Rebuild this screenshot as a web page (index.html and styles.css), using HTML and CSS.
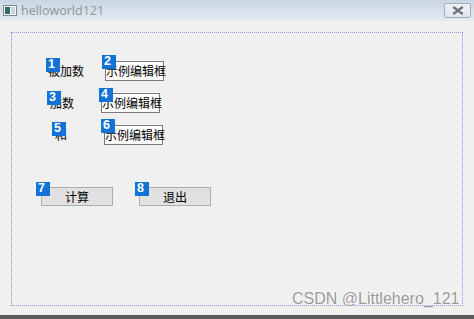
FILE: index.html
```html
<!DOCTYPE html>
<html>
<head>
<meta charset="utf-8">
<link rel="stylesheet" href="styles.css">
</head>
<body>
<div class="window">
  <div class="titlebar">
    <svg class="app-icon" width="14" height="11" viewBox="0 0 14 11">
      <rect x="0.5" y="0.5" width="13" height="10" fill="#f4f6f8" stroke="#7d8a96"/>
      <rect x="2" y="2" width="5" height="7" fill="#2f6b6a"/>
      <rect x="8" y="2" width="4" height="7" fill="#c9d3dc"/>
    </svg>
    <span class="title">helloworld121</span>
    <div class="close-btn">
      <svg width="12" height="9" viewBox="0 0 12 9">
        <path d="M2 1.5 L10 7.5 M10 1.5 L2 7.5" stroke="#6d7278" stroke-width="2.2" stroke-linecap="round"/>
      </svg>
    </div>
  </div>
  <div class="client">
    <div class="frame">
      <div class="row row-1">
        <div class="label label-1"><span class="badge b1">1</span>被加数</div>
        <div class="edit edit-1"><span class="badge b2">2</span>示例编辑框</div>
      </div>
      <div class="row row-2">
        <div class="label label-2"><span class="badge b3">3</span>加数</div>
        <div class="edit edit-2"><span class="badge b4">4</span>示例编辑框</div>
      </div>
      <div class="row row-3">
        <div class="label label-3"><span class="badge b5">5</span>和</div>
        <div class="edit edit-3"><span class="badge b6">6</span>示例编辑框</div>
      </div>
      <div class="buttons">
        <div class="button btn-1"><span class="badge b7">7</span>计算</div>
        <div class="button btn-2"><span class="badge b8">8</span>退出</div>
      </div>
    </div>
  </div>
  <div class="watermark">CSDN @Littlehero_121</div>
  <div class="bottombar"></div>
</div>
</body>
</html>
```

FILE: styles.css
```css
* { box-sizing: border-box; }
html, body {
  margin: 0;
  padding: 0;
  width: 474px;
  height: 319px;
  overflow: hidden;
  background: #f0f0f0;
}
.window {
  position: relative;
  width: 474px;
  height: 319px;
  display: flex;
  flex-direction: column;
  background: #f0f0f0;
  font-family: "Noto Sans CJK SC", "Liberation Sans", sans-serif;
  font-size: 12px;
  color: #000;
}
.titlebar {
  height: 21px;
  display: flex;
  align-items: center;
  padding-left: 3px;
  background: linear-gradient(#c9d6e4, #e4eaf1);
}
.app-icon { display: block; margin-top: -1px; }
.title {
  margin-left: 4px;
  font-family: "Open Sans", "Liberation Sans", sans-serif;
  font-size: 12.5px;
  color: #8e959c;
  margin-top: -1px;
}
.close-btn {
  margin-left: auto;
  margin-right: 3px;
  width: 27px;
  height: 15px;
  border: 1px solid #a3acb6;
  border-radius: 2px;
  background: linear-gradient(#eef2f6, #dfe5ec);
  display: flex;
  align-items: center;
  justify-content: center;
}
.close-btn svg { display: block; }
.client {
  flex: 1;
  padding: 11px 0 0 11px;
}
.frame {
  width: 452px;
  height: 274px;
  border: 1px dotted #8c8ce6;
  padding-top: 28px;
  display: flex;
  flex-direction: column;
}
.row {
  height: 20px;
  display: flex;
  align-items: center;
}
.row-2, .row-3 { margin-top: 12px; }
.label {
  position: relative;
  line-height: 20px;
  white-space: nowrap;
}
.label-1 { margin-left: 36px; width: 57px; }
.label-2 { margin-left: 38px; width: 51px; }
.label-3 { margin-left: 43px; width: 49px; }
.edit {
  position: relative;
  width: 59px;
  height: 20px;
  background: #fff;
  border: 1px solid #7a7a7a;
  line-height: 18px;
  white-space: nowrap;
  overflow: visible;
  padding-left: 0;
}
.buttons {
  margin-top: 42px;
  display: flex;
  padding-left: 29px;
  gap: 26px;
}
.button {
  position: relative;
  width: 72px;
  height: 19px;
  background: #e1e1e1;
  border: 1px solid #adadad;
  text-align: center;
  line-height: 17px;
}
.badge {
  position: absolute;
  width: 14px;
  height: 14px;
  background: #1272d6;
  color: #fff;
  font-family: "Liberation Sans", sans-serif;
  font-weight: bold;
  font-size: 12.5px;
  line-height: 13px;
  padding-left: 2px;
  text-align: left;
  z-index: 2;
}
.b1 { left: -2px; top: -3px; }
.b2 { left: -4px; top: -7px; }
.b3 { left: -3px; top: -2px; }
.b4 { left: -3px; top: -6px; }
.b5 { left: -3px; top: -3px; }
.b6 { left: -4px; top: -7px; }
.b7 { left: -6px; top: -6px; }
.b8 { left: -5px; top: -6px; }
.watermark {
  position: absolute;
  left: 292px;
  top: 290px;
  font-family: "Liberation Sans", sans-serif;
  font-size: 16px;
  color: #999;
  text-shadow: 0 0 2px #fff, 0 0 1px #fff;
  white-space: nowrap;
}
.bottombar {
  height: 4px;
  background: #5b5b5b;
}
```
